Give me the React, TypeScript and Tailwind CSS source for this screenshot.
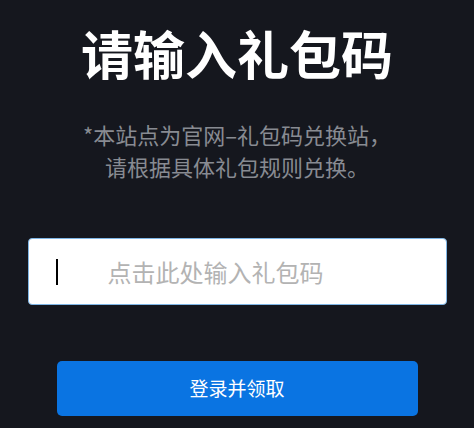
export default function App() {
  return (
    <div
      className="w-[474px] h-[428px] bg-[#15171e] flex flex-col items-center overflow-hidden"
      style={{ fontFamily: '"Noto Sans CJK SC", "Noto Sans", sans-serif' }}
    >
      {/* Title */}
      <h1 className="mt-[27px] text-[52px] leading-[52px] font-bold text-white tracking-normal">
        请输入礼包码
      </h1>

      {/* Notice */}
      <div className="mt-[39px] text-[22px] leading-[32px] text-[#888b92] text-center">
        <p>*本站点为官网–礼包码兑换站，</p>
        <p>请根据具体礼包规则兑换。</p>
      </div>

      {/* Code input */}
      <div className="mt-[56px] w-[419px] h-[67px] bg-white rounded-[4px] border border-[#7fb6e6] flex items-center">
        <span className="ml-[27px] w-[2px] h-[26px] bg-black" />
        <span className="ml-[50px] text-[24px] text-[#b3b3b3]">点击此处输入礼包码</span>
      </div>

      {/* Submit */}
      <button className="mt-[56px] w-[361px] h-[55px] bg-[#0a74e2] rounded-[5px] text-white text-[19px] flex items-center justify-center">
        登录并领取
      </button>
    </div>
  );
}
